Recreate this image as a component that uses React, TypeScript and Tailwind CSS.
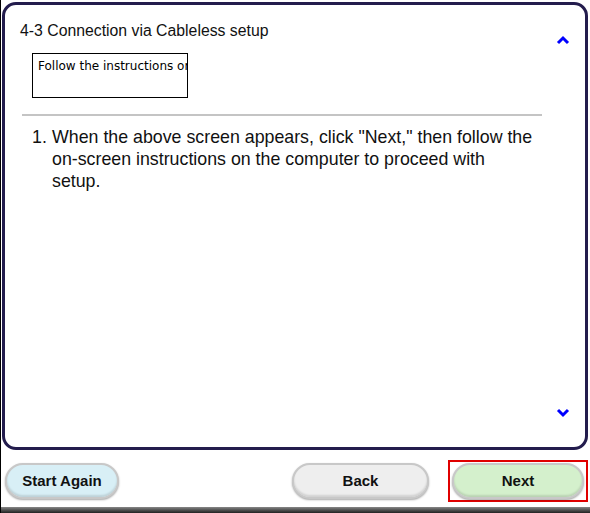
import React from "react";

function Chevron({ up }: { up?: boolean }) {
  return (
    <svg width="14" height="10" viewBox="0 0 14 10">
      <path
        d={up ? "M2 8 L7 3 L12 8" : "M2 2 L7 7 L12 2"}
        fill="none"
        stroke="#0000ff"
        strokeWidth="3"
      />
    </svg>
  );
}

function Pill({ label, bg, w }: { label: string; bg: string; w: string }) {
  return (
    <div
      className={`${w} h-[36px] rounded-full border-2 border-[#c8c8c8] ${bg} flex items-center justify-center shadow-[inset_0_-2px_2px_rgba(0,0,0,0.12),0_1px_2px_rgba(0,0,0,0.35)] text-[15px] font-bold text-[#111] [font-family:'Liberation_Sans',Arial,sans-serif]`}
    >
      {label}
    </div>
  );
}

export default function App() {
  return (
    <div className="w-[590px] h-[513px] bg-white flex flex-col border-l border-black overflow-hidden [font-family:'Liberation_Sans',Arial,sans-serif]">
      <div className="ml-[1px] mt-[2px] w-[586px] h-[448px] border-[3px] border-[#231c4d] rounded-[14px] flex">
        <div className="flex-1 flex flex-col pl-[15px] pt-[16px]">
          <div className="text-[15.8px] text-[#111] leading-[20px]">4-3 Connection via Cableless setup</div>
          <div className="ml-[12px] mt-[12px] w-[156px] h-[45px] border border-black overflow-hidden whitespace-nowrap pl-[5px] pt-[4px] text-[12px] leading-[16px] text-black [font-family:'DejaVu_Sans',sans-serif]">
            Follow the instructions on the computer
          </div>
          <div className="mt-[16px] ml-[2px] w-[520px] h-[2px] bg-[#c4c4c4]" />
          <div className="mt-[10px] flex text-[17.8px] leading-[22px] text-[#111]">
            <span className="w-[32px] pl-[12px] shrink-0">1.</span>
            <span className="w-[484px]">
              When the above screen appears, click "Next," then follow the on-screen instructions on the computer to proceed with setup.
            </span>
          </div>
        </div>
        <div className="w-[38px] flex flex-col items-center justify-between pt-[30px] pb-[29px] pr-[6px]">
          <Chevron up />
          <Chevron />
        </div>
      </div>
      <div className="flex items-center mt-[10px] h-[42px]">
        <div className="ml-[4px]">
          <Pill label="Start Again" bg="bg-[#d8eff6]" w="w-[114px]" />
        </div>
        <div className="ml-[173px]">
          <Pill label="Back" bg="bg-[#eeeeee]" w="w-[137px]" />
        </div>
        <div className="ml-[19px] w-[140px] h-[42px] border-2 border-[#e00000] flex items-center justify-center">
          <Pill label="Next" bg="bg-[#d4f0cc]" w="w-[132px]" />
        </div>
      </div>
      <div className="mt-auto h-[6px] bg-gradient-to-b from-[#888] to-[#222]" />
    </div>
  );
}
